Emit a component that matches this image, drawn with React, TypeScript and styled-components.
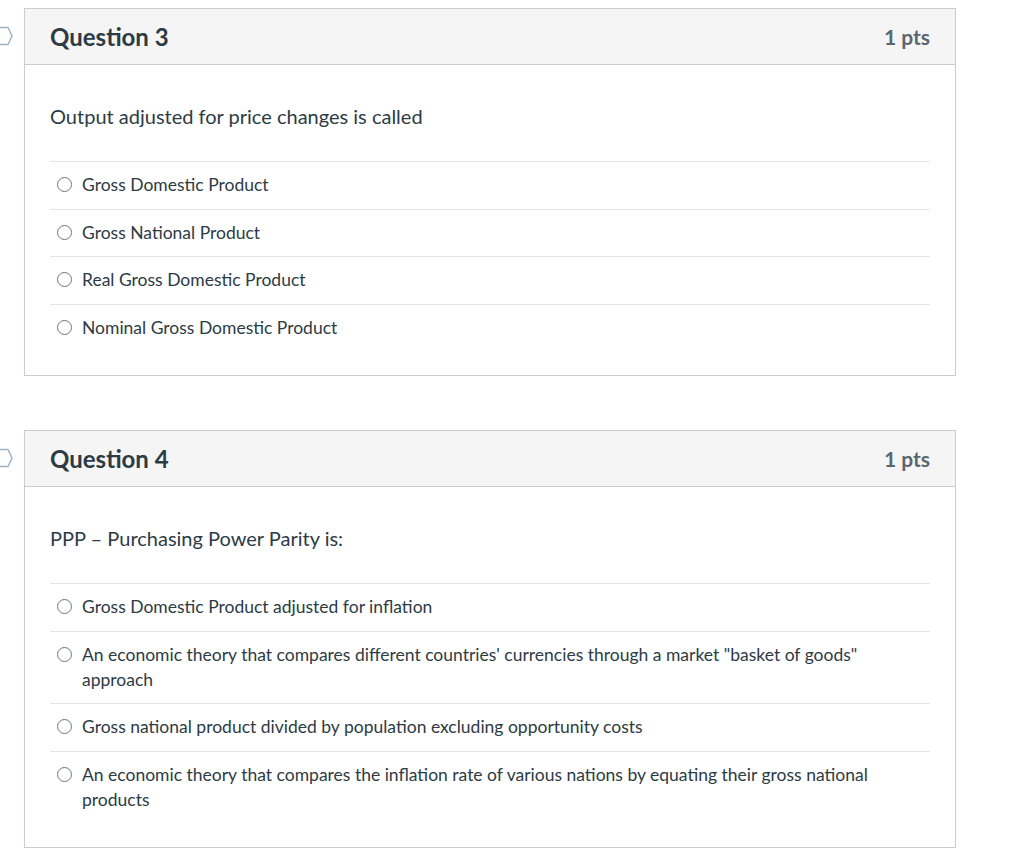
import { FC } from 'react';
import styled, { createGlobalStyle } from 'styled-components';

const GlobalStyle = createGlobalStyle`
  html, body {
    margin: 0;
    padding: 0;
    background: #ffffff;
  }
  body {
    font-family: Lato, "Open Sans", "Liberation Sans", sans-serif;
    color: #2d3b45;
  }
`;

const Page = styled.div`
  padding: 8px 68px 0 0;
  display: flex;
  flex-direction: column;
  gap: 54px;
`;

const QuestionRow = styled.div`
  display: flex;
  align-items: flex-start;
`;

const FlagSlot = styled.div`
  width: 24px;
  flex: 0 0 24px;
  padding-top: 18px;
  overflow: hidden;
  svg {
    display: block;
    margin-left: -7px;
  }
`;

const Card = styled.div`
  flex: 1;
  border: 1px solid #c7cdd1;
  background: #fff;
`;

const Header = styled.div`
  height: 56px;
  box-sizing: border-box;
  padding: 0 25px 1px;
  display: flex;
  align-items: center;
  justify-content: space-between;
  background: #f5f5f5;
  border-bottom: 1px solid #c7cdd1;
`;

const Title = styled.h2`
  margin: 0;
  font-size: 24px;
  font-weight: 700;
  color: #2d3b45;
`;

const Points = styled.span`
  font-size: 21px;
  font-weight: 700;
  color: #5b6770;
`;

const Body = styled.div`
  padding: 38px 25px 24px;
`;

const Prompt = styled.div`
  font-size: 20px;
  line-height: 27px;
  color: #2d3b45;
  margin-bottom: 31px;
`;

const Answers = styled.div`
  display: flex;
  flex-direction: column;
`;

const Answer = styled.label`
  display: flex;
  align-items: flex-start;
  gap: 10px;
  padding: 10px 0 11.5px;
  border-top: 1px solid #e3e6e8;
  font-size: 17.5px;
  line-height: 25px;
  color: #2d3b45;
`;

const Radio = styled.span`
  flex: 0 0 15px;
  width: 15px;
  height: 15px;
  margin: 5px 0 0 7px;
  box-sizing: border-box;
  border: 1px solid #6b7780;
  border-radius: 50%;
  background: #fff;
`;

const AnswerText = styled.span`
  flex: 1;
  padding-right: 28px;
`;

const Flag: FC = () => (
  <svg width="20" height="20" viewBox="0 0 20 20">
    <path d="M0 1.5 H15 L19 10 L15 18.5 H0 Z" fill="none" stroke="#9fb3c6" strokeWidth="1.5" strokeLinejoin="round" />
  </svg>
);

type Q = { title: string; points: string; prompt: string; answers: string[] };

const questions: Q[] = [
  {
    title: 'Question 3',
    points: '1 pts',
    prompt: 'Output adjusted for price changes is called',
    answers: [
      'Gross Domestic Product',
      'Gross National Product',
      'Real Gross Domestic Product',
      'Nominal Gross Domestic Product',
    ],
  },
  {
    title: 'Question 4',
    points: '1 pts',
    prompt: 'PPP \u2013 Purchasing Power Parity is:',
    answers: [
      'Gross Domestic Product adjusted for inflation',
      'An economic theory that compares different countries\' currencies through a market "basket of goods" approach',
      'Gross national product divided by population excluding opportunity costs',
      'An economic theory that compares the inflation rate of various nations by equating their gross national products',
    ],
  },
];

const App: FC = () => {
  return (
    <>
      <GlobalStyle />
      <Page>
        {questions.map((q) => (
          <QuestionRow key={q.title}>
            <FlagSlot>
              <Flag />
            </FlagSlot>
            <Card>
              <Header>
                <Title>{q.title}</Title>
                <Points>{q.points}</Points>
              </Header>
              <Body>
                <Prompt>{q.prompt}</Prompt>
                <Answers>
                  {q.answers.map((a) => (
                    <Answer key={a}>
                      <Radio />
                      <AnswerText>{a}</AnswerText>
                    </Answer>
                  ))}
                </Answers>
              </Body>
            </Card>
          </QuestionRow>
        ))}
      </Page>
    </>
  );
};

export default App;
